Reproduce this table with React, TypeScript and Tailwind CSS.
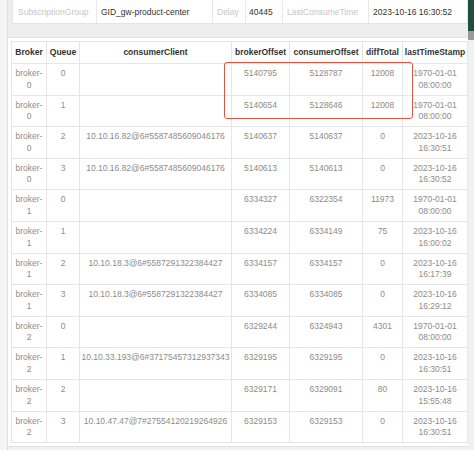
import React from 'react'

type Row = {
  broker: string
  queue: number
  client: string
  brokerOffset: number
  consumerOffset: number
  diff: number
  date: string
  time: string
}

const rows: Row[] = [
  { broker: '0', queue: 0, client: '', brokerOffset: 5140795, consumerOffset: 5128787, diff: 12008, date: '1970-01-01', time: '08:00:00' },
  { broker: '0', queue: 1, client: '', brokerOffset: 5140654, consumerOffset: 5128646, diff: 12008, date: '1970-01-01', time: '08:00:00' },
  { broker: '0', queue: 2, client: '10.10.16.82@6#5587485609046176', brokerOffset: 5140637, consumerOffset: 5140637, diff: 0, date: '2023-10-16', time: '16:30:51' },
  { broker: '0', queue: 3, client: '10.10.16.82@6#5587485609046176', brokerOffset: 5140613, consumerOffset: 5140613, diff: 0, date: '2023-10-16', time: '16:30:52' },
  { broker: '1', queue: 0, client: '', brokerOffset: 6334327, consumerOffset: 6322354, diff: 11973, date: '1970-01-01', time: '08:00:00' },
  { broker: '1', queue: 1, client: '', brokerOffset: 6334224, consumerOffset: 6334149, diff: 75, date: '2023-10-16', time: '16:00:02' },
  { broker: '1', queue: 2, client: '10.10.18.3@6#5587291322384427', brokerOffset: 6334157, consumerOffset: 6334157, diff: 0, date: '2023-10-16', time: '16:17:39' },
  { broker: '1', queue: 3, client: '10.10.18.3@6#5587291322384427', brokerOffset: 6334085, consumerOffset: 6334085, diff: 0, date: '2023-10-16', time: '16:29:12' },
  { broker: '2', queue: 0, client: '', brokerOffset: 6329244, consumerOffset: 6324943, diff: 4301, date: '1970-01-01', time: '08:00:00' },
  { broker: '2', queue: 1, client: '10.10.33.193@6#37175457312937343', brokerOffset: 6329195, consumerOffset: 6329195, diff: 0, date: '2023-10-16', time: '16:30:51' },
  { broker: '2', queue: 2, client: '', brokerOffset: 6329171, consumerOffset: 6329091, diff: 80, date: '2023-10-16', time: '15:55:48' },
  { broker: '2', queue: 3, client: '10.10.47.47@7#27554120219264926', brokerOffset: 6329153, consumerOffset: 6329153, diff: 0, date: '2023-10-16', time: '16:30:51' },
]

const headers = ['Broker', 'Queue', 'consumerClient', 'brokerOffset', 'consumerOffset', 'diffTotal', 'lastTimeStamp']
const widths = ['w-[35px]', 'w-[33px]', 'w-[152px]', 'w-[58px]', 'w-[73px]', 'w-[40px]', 'w-[65px]']

// summary row above the table
function SummaryRow() {
  return (
    <div className="flex h-[24px] bg-white border border-t-0 border-[#e4e4e4] text-[8.5px] leading-[24px]">
      <div className="w-[84px] pl-[5px] text-[#c6c6c6] border-r border-[#e8e8e8]">SubscriptionGroup</div>
      <div className="w-[116px] pl-[4px] text-[#333] border-r border-[#e8e8e8]">GID_gw-product-center</div>
      <div className="w-[33px] pl-[4px] text-[#c6c6c6] border-r border-[#e8e8e8]">Delay</div>
      <div className="w-[37px] pl-[3px] text-[#333] border-r border-[#e8e8e8]">40445</div>
      <div className="w-[86px] pl-[4px] text-[#c6c6c6] border-r border-[#e8e8e8]">LastConsumeTime</div>
      <div className="flex-1 pl-[4px] text-[#333]">2023-10-16 16:30:52</div>
    </div>
  )
}

export default function App() {
  return (
    <div className="w-[474px] h-[450px] overflow-hidden flex bg-[#f1f1f1] font-['Liberation_Sans',Arial,sans-serif]">
      <div className="w-[8px] shrink-0 bg-[#f4f4f4] border-r border-[#e0e0e0]" />

      <div className="flex-1 flex flex-col min-w-0">
        <div className="bg-[#eeeeee] pl-[4px] pb-[13px]">
          <SummaryRow />
        </div>

        <div className="bg-white border-t border-b border-[#e2e2e2] pl-[3px] pt-[3px] pb-[3px]">
          <div className="relative">
            <table className="border-collapse table-fixed text-center">
              <thead>
                <tr className="h-[22px]">
                  {headers.map((h, i) => (
                    <th
                      key={h}
                      className={`${widths[i]} p-0 border border-[#e6e6e6] text-[8.5px] font-bold text-[#333] align-middle`}
                    >
                      {h}
                    </th>
                  ))}
                </tr>
              </thead>
              <tbody className="text-[8.5px] leading-[11.7px] text-[#8c8c8c]">
                {rows.map((r, i) => (
                  <tr key={i} className="h-[31.6px]">
                    <td className="p-0 pt-[4px] border border-[#e6e6e6] align-top">
                      broker-
                      <br />
                      {r.broker}
                    </td>
                    <td className="p-0 pt-[4px] border border-[#e6e6e6] align-top">{r.queue}</td>
                    <td className="p-0 pt-[4px] border border-[#e6e6e6] align-top whitespace-nowrap">{r.client}</td>
                    <td className="p-0 pt-[4px] border border-[#e6e6e6] align-top">{r.brokerOffset}</td>
                    <td className="p-0 pt-[4px] border border-[#e6e6e6] align-top">{r.consumerOffset}</td>
                    <td className="p-0 pt-[4px] border border-[#e6e6e6] align-top">{r.diff}</td>
                    <td className="p-0 pt-[4px] border border-[#e6e6e6] align-top">
                      {r.date}
                      <br />
                      {r.time}
                    </td>
                  </tr>
                ))}
              </tbody>
            </table>

            {/* highlight annotation */}
            <div className="absolute left-[213px] top-[21px] w-[189px] h-[57px] rounded-[3px] border-[1.5px] border-[#e0553f]" />
          </div>
        </div>
      </div>

      <div className="w-[6px] shrink-0 flex flex-col">
        <div className="h-[31px] bg-[#234d3f]" />
        <div className="h-[9px] bg-[#9a9a9a]" />
      </div>
    </div>
  )
}
